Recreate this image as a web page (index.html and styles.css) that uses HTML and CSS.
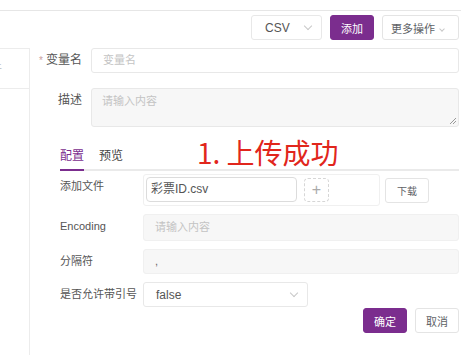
FILE: index.html
```html
<!DOCTYPE html>
<html lang="zh-CN">
<head>
  <meta charset="UTF-8">
  <title>变量配置</title>
  <link rel="stylesheet" href="styles.css">
</head>
<body>
  <div class="topline"></div>

  <div class="toolbar">
    <div class="select csv-select">CSV <span class="chev"></span></div>
    <button class="btn primary">添加</button>
    <button class="btn more">更多操作 <span class="chev small"></span></button>
  </div>

  <div class="layout">
    <div class="sidebar">
      <div class="side-item">牛</div>
    </div>

    <div class="content">
      <div class="row">
        <label class="label req"><span class="star">*</span>变量名</label>
        <div class="input">变量名</div>
      </div>
      <div class="row">
        <label class="label top">描述</label>
        <div class="textarea">请输入内容<span class="grip"></span></div>
      </div>

      <div class="tabs">
        <span class="tab active">配置</span>
        <span class="tab">预览</span>
        <span class="note">1. 上传成功</span>
      </div>

      <div class="config">
        <div class="crow file-row">
          <label class="clabel top">添加文件</label>
          <div class="file-box">
            <div class="file-name">彩票ID.csv</div>
            <div class="plus">+</div>
          </div>
          <button class="btn small-btn">下载</button>
        </div>
        <div class="crow">
          <label class="clabel">Encoding</label>
          <div class="input gray tall">请输入内容</div>
        </div>
        <div class="crow">
          <label class="clabel">分隔符</label>
          <div class="input gray value">,</div>
        </div>
        <div class="crow">
          <label class="clabel">是否允许带引号</label>
          <div class="select quote-select">false <span class="chev"></span></div>
        </div>
        <div class="actions">
          <button class="btn primary">确定</button>
          <button class="btn">取消</button>
        </div>
      </div>
    </div>
  </div>
</body>
</html>
```

FILE: styles.css
```css
body {
  margin: 0;
  font-family: "Liberation Sans", "Noto Sans CJK SC", sans-serif;
  font-size: 11px;
  color: #606266;
  background: #fff;
  height: 355px;
  overflow: hidden;
}

.topline {
  height: 10px;
  width: 461px;
  border-bottom: 1px solid #e6e6e6;
}

.toolbar {
  display: flex;
  justify-content: flex-end;
  gap: 8px;
  padding: 4px 15px 0 0;
  height: 25px;
}

.btn {
  font-family: inherit;
  font-size: 11px;
  height: 25px;
  padding: 0 12px;
  border: 1px solid #e4e4e4;
  border-radius: 3px;
  background: #fff;
  color: #606266;
  box-sizing: border-box;
}

.btn.primary {
  background: #7b2d8e;
  border-color: #7b2d8e;
  color: #fff;
  width: 44px;
  padding: 0;
}

.btn.more {
  width: 77px;
  padding: 0 0 0 8px;
  text-align: left;
}

.select {
  display: flex;
  align-items: center;
  justify-content: space-between;
  border: 1px solid #e8e8e8;
  border-radius: 3px;
  box-sizing: border-box;
  height: 25px;
  padding: 0 10px;
  color: #555;
  font-size: 12px;
}

.csv-select {
  width: 71px;
  padding-left: 13px;
}

.chev {
  display: inline-block;
  width: 5px;
  height: 5px;
  border-right: 1px solid #c8c8c8;
  border-bottom: 1px solid #c8c8c8;
  transform: rotate(45deg);
  margin-top: -3px;
}

.chev.small {
  width: 3px;
  height: 3px;
  margin-left: 2px;
  margin-top: 0;
  vertical-align: 2px;
}

.layout {
  display: flex;
  margin-top: 8px;
}

.sidebar {
  width: 29px;
  height: 320px;
  border-right: 1px solid #ececec;
  overflow: hidden;
  flex: none;
}

.side-item {
  height: 39px;
  border-top: 1px solid #ececec;
  border-bottom: 1px solid #ececec;
  line-height: 39px;
  margin-left: -9px;
  color: #bbb;
}

.content {
  width: 429px;
}

.row {
  display: flex;
  margin-bottom: 15px;
}

.label {
  width: 52px;
  margin-right: 9px;
  text-align: right;
  line-height: 25px;
  color: #555;
  font-size: 12px;
  flex: none;
}

.star {
  color: #c9a0a0;
  margin-right: 3px;
  font-size: 10px;
}

.input {
  flex: 1;
  height: 25px;
  line-height: 23px;
  border: 1px solid #e8e8e8;
  border-radius: 3px;
  box-sizing: border-box;
  padding: 0 11px;
  color: #c4c4c4;
}

.textarea {
  position: relative;
  flex: 1;
  height: 39px;
  border: 1px solid #e8e8e8;
  border-radius: 3px;
  box-sizing: border-box;
  background: #f7f7f7;
  padding: 3px 10px;
  color: #c4c4c4;
}

.grip {
  position: absolute;
  right: 2px;
  bottom: 2px;
  width: 6px;
  height: 6px;
  background: linear-gradient(135deg, transparent 45%, #999 45%, #999 55%, transparent 55%, transparent 70%, #999 70%, #999 80%, transparent 80%);
}

.tabs {
  position: relative;
  display: flex;
  gap: 15px;
  margin: 3px 0 0 30px;
  height: 27px;
  border-bottom: 2px solid #eaeaea;
  align-items: flex-end;
}

.tab {
  font-size: 12px;
  color: #444;
  padding-bottom: 6px;
}

.tab.active {
  color: #7b2d8e;
  border-bottom: 2px solid #7b2d8e;
  margin-bottom: -2px;
}

.note {
  position: absolute;
  left: 137px;
  top: -7px;
  font-family: "Noto Sans CJK SC", sans-serif;
  font-size: 28px;
  line-height: 34px;
  color: #e1261c;
}

.config {
  margin-left: 30px;
  padding-top: 3px;
}

.crow {
  display: flex;
  margin-bottom: 8px;
}

.clabel {
  width: 83px;
  flex: none;
  font-size: 11px;
  color: #555;
  line-height: 25px;
  white-space: nowrap;
}

.clabel.top {
  line-height: 24px;
}

.file-row {
  align-items: flex-start;
}

.file-box {
  display: flex;
  gap: 7px;
  width: 237px;
  height: 32px;
  border: 1px solid #f0f0f0;
  border-radius: 3px;
  box-sizing: border-box;
  padding: 2px;
}

.file-name {
  width: 151px;
  height: 25px;
  line-height: 23px;
  border: 1px solid #dcdcdc;
  border-radius: 4px;
  box-sizing: border-box;
  padding: 0 4px;
  color: #555;
  font-size: 12px;
}

.plus {
  width: 25px;
  height: 24px;
  border: 1px dashed #d6d6d6;
  border-radius: 4px;
  box-sizing: border-box;
  text-align: center;
  line-height: 21px;
  font-size: 16px;
  color: #aaa;
  margin-top: 1px;
}

.small-btn {
  margin: 4px 0 0 5px;
  width: 44px;
  padding: 0;
  font-size: 10px;
}

.input.gray {
  background: #f7f7f7;
  border-color: #f0f0f0;
}

.input.tall {
  height: 27px;
  line-height: 25px;
}

.input.value {
  color: #666;
}

.quote-select {
  width: 165px;
  padding: 0 10px 0 12px;
  color: #555;
  font-size: 12px;
}

.actions {
  display: flex;
  justify-content: flex-end;
  gap: 8px;
  margin-top: -7px;
}

.actions .btn {
  width: 44px;
  padding: 0;
}
```
